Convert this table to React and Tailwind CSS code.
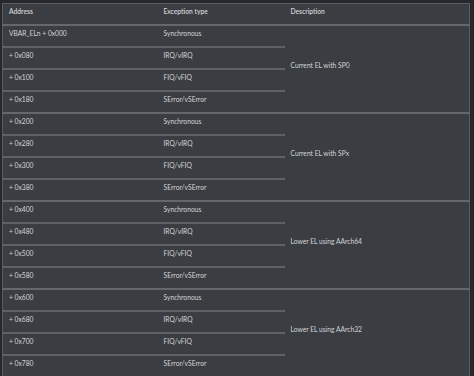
const GROUPS = [
  { base: ["VBAR_ELn + 0x000", "+ 0x080", "+ 0x100", "+ 0x180"], desc: "Current EL with SP0" },
  { base: ["+ 0x200", "+ 0x280", "+ 0x300", "+ 0x380"], desc: "Current EL with SPx" },
  { base: ["+ 0x400", "+ 0x480", "+ 0x500", "+ 0x580"], desc: "Lower EL using AArch64" },
  { base: ["+ 0x600", "+ 0x680", "+ 0x700", "+ 0x780"], desc: "Lower EL using AArch32" },
];

const TYPES = ["Synchronous", "IRQ/vIRQ", "FIQ/vFIQ", "SError/vSError"];

const cell = "h-[22px] px-[6px] pt-[3px] align-top text-left";

export default function App() {
  return (
    <div
      className="w-[474px] h-[376px] overflow-hidden bg-[#26282c] pt-[3px] pl-[2px] pr-[4px] text-[6.7px] leading-[9px] text-[#d4d5d7]"
      style={{ fontFamily: "Lato, 'Open Sans', sans-serif" }}
    >
      <table className="w-full border-collapse bg-[#3a3d42] border-t border-l border-r border-[#5a5d62] table-fixed">
        <colgroup>
          <col className="w-[155px]" />
          <col className="w-[127px]" />
          <col />
        </colgroup>
        <thead>
          <tr className="border-b-2 border-[#64676c]">
            <th className="h-[21px] px-[6px] pt-[3px] align-top text-left font-semibold">Address</th>
            <th className="h-[21px] px-[6px] pt-[3px] align-top text-left font-semibold">Exception type</th>
            <th className="h-[21px] px-[6px] pt-[3px] align-top text-left font-semibold">Description</th>
          </tr>
        </thead>
        <tbody>
          {GROUPS.map((g) =>
            g.base.map((addr, i) => (
              <tr
                key={addr}
                className={i === 3 ? "border-b-2 border-[#64676c]" : ""}
              >
                <td className={`${cell} ${i < 3 ? "border-b-2 border-[#5e6166]" : ""}`}>{addr}</td>
                <td className={`${cell} ${i < 3 ? "border-b-2 border-[#5e6166]" : ""}`}>{TYPES[i]}</td>
                {i === 0 && (
                  <td rowSpan={4} className="px-[6px] align-middle text-left pb-[6px]">
                    {g.desc}
                  </td>
                )}
              </tr>
            ))
          )}
        </tbody>
      </table>
    </div>
  );
}
